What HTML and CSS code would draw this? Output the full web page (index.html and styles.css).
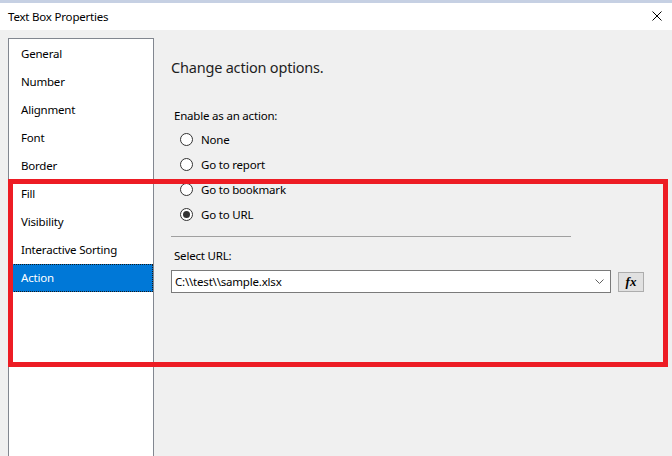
FILE: index.html
```html
<!DOCTYPE html>
<html>
<head>
<meta charset="utf-8">
<link rel="stylesheet" href="styles.css">
</head>
<body>
<div class="window">
  <div class="topstrip"></div>
  <div class="titlebar">
    <span class="title">Text Box Properties</span>
    <svg class="close" width="10" height="10" viewBox="0 0 10 10"><path d="M0.5 0.5 L9.5 9.5 M9.5 0.5 L0.5 9.5" stroke="#000" stroke-width="1" fill="none"/></svg>
  </div>
  <div class="content">
    <ul class="nav">
      <li class="item">General</li>
      <li class="item">Number</li>
      <li class="item">Alignment</li>
      <li class="item">Font</li>
      <li class="item">Border</li>
      <li class="item">Fill</li>
      <li class="item">Visibility</li>
      <li class="item">Interactive Sorting</li>
      <li class="item selected">Action</li>
    </ul>
    <div class="pane">
      <div class="heading">Change action options.</div>
      <div class="label">Enable as an action:</div>
      <div class="radios">
        <div class="radio"><span class="circle"></span><span>None</span></div>
        <div class="radio"><span class="circle"></span><span>Go to report</span></div>
        <div class="radio"><span class="circle"></span><span>Go to bookmark</span></div>
        <div class="radio"><span class="circle checked"></span><span>Go to URL</span></div>
      </div>
      <div class="sep"></div>
      <div class="label url-label">Select URL:</div>
      <div class="url-row">
        <div class="combo">
          <span class="combo-text">C:\\test\\sample.xlsx</span>
          <svg class="chev" width="9" height="5" viewBox="0 0 9 5"><path d="M0.5 0.5 L4.5 4.5 L8.5 0.5" stroke="#606060" stroke-width="1" fill="none"/></svg>
        </div>
        <div class="fx"><span>fx</span></div>
      </div>
    </div>
  </div>
  <div class="annotation"></div>
</div>
</body>
</html>
```
FILE: styles.css
```css
* { box-sizing: border-box; }
html, body { margin: 0; padding: 0; }
body {
  width: 672px;
  height: 456px;
  overflow: hidden;
  background: #f0f0f0;
  font-family: "Noto Sans", "Open Sans", sans-serif;
  font-size: 11.5px;
  letter-spacing: -0.2px;
  color: #000;
}
.window { position: relative; width: 672px; height: 456px; display: flex; flex-direction: column; }
.topstrip { height: 3px; background: #c6d0e3; }
.titlebar {
  height: 27px;
  background: #fff;
  display: flex;
  align-items: center;
  justify-content: space-between;
  padding: 0 10px 0 8px;
}
.title { line-height: 16px; margin-top: 1px; }
.close { display: block; margin-top: -2px; }
.content { flex: 1; display: flex; padding: 8px 0 0 8px; }
.nav {
  list-style: none;
  margin: 0;
  padding: 1px 0 0 0;
  width: 146px;
  background: #fff;
  border: 1px solid #828790;
  border-bottom: none;
}
.item {
  height: 28px;
  line-height: 28px;
  padding-left: 12px;
  white-space: nowrap;
}
.item.selected {
  background: #0078d7;
  color: #fff;
  outline: 1px dotted #1a1a1a;
  outline-offset: -1px;
}
.pane { flex: 1; padding-left: 17px; display: flex; flex-direction: column; }
.heading { font-size: 14.5px; line-height: 20px; margin-top: 19px; color: #1e1e1e; }
.label { line-height: 16px; padding-left: 3px; margin-top: 31px; }
.radios { margin-top: 3px; padding-left: 9px; }
.radio { height: 25px; display: flex; align-items: center; gap: 8px; }
.circle {
  width: 13px; height: 13px;
  border: 1px solid #333;
  border-radius: 50%;
  background: #fff;
  display: flex; align-items: center; justify-content: center;
}
.circle.checked::after {
  content: "";
  width: 7px; height: 7px;
  border-radius: 50%;
  background: #333;
}
.sep { width: 400px; height: 1px; background: #a0a0a0; margin-top: 9px; }
.url-label { margin-top: 11px; }
.url-row { display: flex; align-items: center; gap: 7px; margin-top: 6px; }
.combo {
  width: 440px; height: 23px;
  background: #fff;
  border: 1px solid #7a7a7a;
  display: flex; align-items: center; justify-content: space-between;
  padding: 0 6px 0 3px;
}
.combo-text { line-height: 16px; }
.chev { display: block; }
.fx {
  width: 26px; height: 20px;
  background: #e1e1e1;
  border: 1px solid #adadad;
  display: flex; align-items: center; justify-content: center;
  font-family: "Liberation Serif", serif;
  font-weight: bold;
  font-style: italic;
  font-size: 13px;
  letter-spacing: 0;
}
.annotation {
  position: absolute;
  left: 8px; top: 179px;
  width: 660px; height: 188px;
  border: 5px solid #ed1c24;
  pointer-events: none;
}
```
